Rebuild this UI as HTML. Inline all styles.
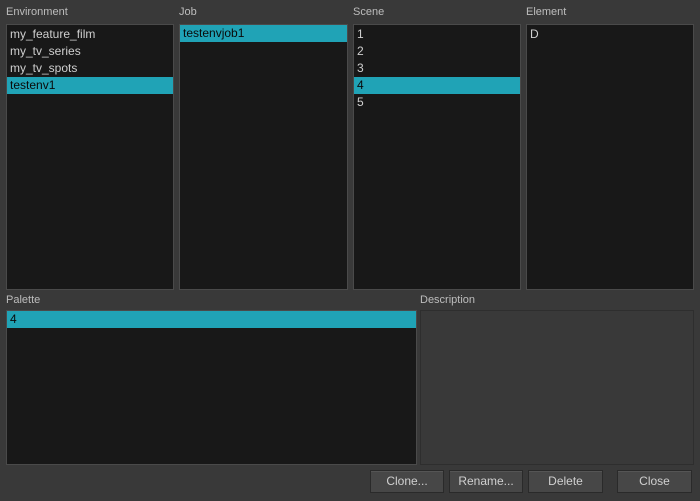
<!DOCTYPE html>
<html><head><style>
body{margin:0;width:700px;height:501px;background:#393939;font-family:"Liberation Sans",sans-serif;font-size:12px;color:#cfcfcf;position:relative;overflow:hidden}
.l{position:absolute;color:#bdbdbd;font-size:11px}
.b{position:absolute;background:#181818;border:1px solid #4a4a4a;box-sizing:border-box}
.r{height:17px;line-height:17px;padding-left:3px;white-space:nowrap}
.s{background:#20a3b6;color:#0a0a0a}
.btn{position:absolute;top:470px;height:23px;background:#474747;border:1px solid #2a2a2a;box-sizing:border-box;text-align:center;line-height:21px;color:#d0d0d0;box-shadow:inset 0 1px 0 #555}
</style></head><body>
<div class="l" style="left:6px;top:6px">Environment</div>
<div class="l" style="left:179px;top:6px">Job</div>
<div class="l" style="left:353px;top:6px">Scene</div>
<div class="l" style="left:526px;top:6px">Element</div>
<div class="b" style="left:6px;top:24px;width:168px;height:266px;padding-top:1px">
<div class="r">my_feature_film</div><div class="r">my_tv_series</div><div class="r">my_tv_spots</div><div class="r s">testenv1</div></div>
<div class="b" style="left:179px;top:24px;width:169px;height:266px">
<div class="r s">testenvjob1</div></div>
<div class="b" style="left:353px;top:24px;width:168px;height:266px;padding-top:1px">
<div class="r">1</div><div class="r">2</div><div class="r">3</div><div class="r s">4</div><div class="r">5</div></div>
<div class="b" style="left:526px;top:24px;width:168px;height:266px;padding-top:1px">
<div class="r">D</div></div>
<div class="l" style="left:6px;top:294px">Palette</div>
<div class="l" style="left:420px;top:294px">Description</div>
<div class="b" style="left:6px;top:310px;width:411px;height:155px">
<div class="r s">4</div></div>
<div class="b" style="left:420px;top:310px;width:274px;height:155px;background:#393939;border-color:#2e2e2e"></div>
<div class="btn" style="left:370px;width:74px">Clone...</div>
<div class="btn" style="left:449px;width:74px">Rename...</div>
<div class="btn" style="left:528px;width:75px">Delete</div>
<div class="btn" style="left:617px;width:75px">Close</div>
</body></html>
